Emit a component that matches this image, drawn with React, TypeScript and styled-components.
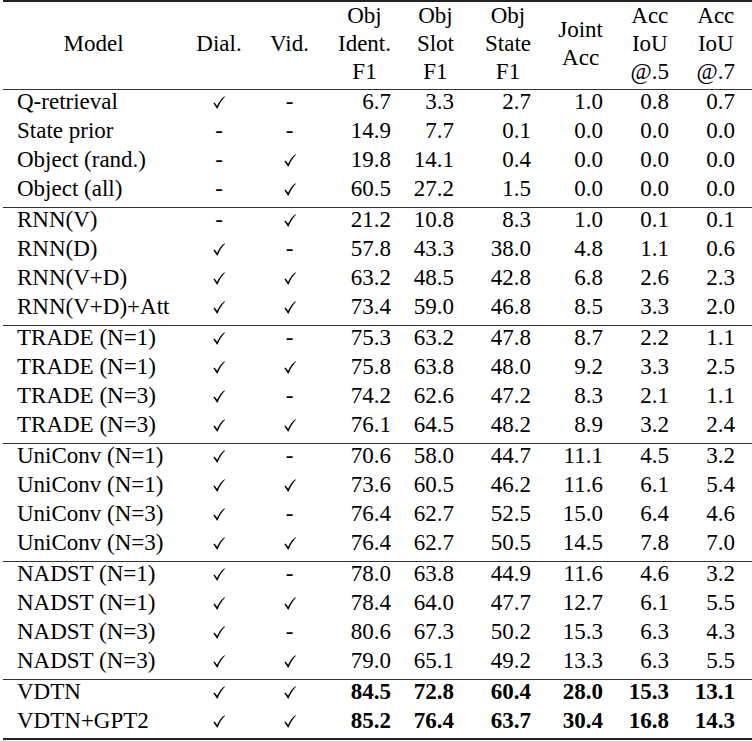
import styled, { createGlobalStyle } from "styled-components";

type Mark = "y" | "n";

interface IRow {
  model: string;
  dial: Mark;
  vid: Mark;
  scores: string[];
}

interface IColumn {
  label: string[];
  width: number;
  align: "left" | "center" | "right";
}

const GlobalStyle = createGlobalStyle`
  body {
    margin: 0;
    background: #ffffff;
  }
`;

const Page = styled.div`
  padding-left: 3px;
  width: 749px;
`;

const Table = styled.table`
  width: 749px;
  table-layout: fixed;
  border-collapse: separate;
  border-spacing: 0;
  font-family: "Liberation Serif", "Times New Roman", serif;
  font-size: 23px;
  color: #000;
  border-top: 2px solid #222;
  border-bottom: 2px solid #222;
`;

const HeadCell = styled.th<{ $w: number; $align: string; $last?: boolean }>`
  box-sizing: border-box;
  width: ${(p) => p.$w}px;
  font-weight: normal;
  line-height: 28px;
  vertical-align: middle;
  text-align: ${(p) => p.$align};
  padding: 0 ${(p) => (p.$last ? 17 : p.$align === "right" ? 13 : 0)}px 3px
    ${(p) => (p.$align === "left" ? 14 : 0)}px;
  border-bottom: 1px solid #333;
  white-space: nowrap;
`;

const HeadStack = styled.span`
  display: inline-block;
  text-align: center;
`;

const Group = styled.tbody`
  & + & tr:first-child td {
    border-top: 1px solid #333;
  }
  tr:last-child td {
    padding-bottom: 6px;
  }
  &:last-of-type tr:last-child td {
    padding-bottom: 5px;
  }
`;

const Cell = styled.td<{ $align: string; $bold?: boolean; $last?: boolean }>`
  box-sizing: border-box;
  line-height: 24px;
  vertical-align: top;
  white-space: nowrap;
  text-align: ${(p) => p.$align};
  font-weight: ${(p) => (p.$bold ? "bold" : "normal")};
  padding: 0 ${(p) => (p.$last ? 17 : p.$align === "right" ? 13 : 0)}px 5px
    ${(p) => (p.$align === "left" ? 14 : 0)}px;
`;

const CheckIcon = styled.svg`
  width: 12px;
  height: 13px;
  vertical-align: baseline;
`;

const columns: IColumn[] = [
  { label: ["Model"], width: 180, align: "left" },
  { label: ["Dial."], width: 72, align: "center" },
  { label: ["Vid."], width: 69, align: "center" },
  { label: ["Obj", "Ident.", "F1"], width: 80, align: "right" },
  { label: ["Obj", "Slot", "F1"], width: 63, align: "right" },
  { label: ["Obj", "State", "F1"], width: 77, align: "right" },
  { label: ["Joint", "Acc"], width: 72, align: "right" },
  { label: ["Acc", "IoU", "@.5"], width: 66, align: "right" },
  { label: ["Acc", "IoU", "@.7"], width: 70, align: "right" },
];

const r = (model: string, dial: Mark, vid: Mark, ...scores: string[]): IRow => ({
  model,
  dial,
  vid,
  scores,
});

const groups: IRow[][] = [
  [
    r("Q-retrieval", "y", "n", "6.7", "3.3", "2.7", "1.0", "0.8", "0.7"),
    r("State prior", "n", "n", "14.9", "7.7", "0.1", "0.0", "0.0", "0.0"),
    r("Object (rand.)", "n", "y", "19.8", "14.1", "0.4", "0.0", "0.0", "0.0"),
    r("Object (all)", "n", "y", "60.5", "27.2", "1.5", "0.0", "0.0", "0.0"),
  ],
  [
    r("RNN(V)", "n", "y", "21.2", "10.8", "8.3", "1.0", "0.1", "0.1"),
    r("RNN(D)", "y", "n", "57.8", "43.3", "38.0", "4.8", "1.1", "0.6"),
    r("RNN(V+D)", "y", "y", "63.2", "48.5", "42.8", "6.8", "2.6", "2.3"),
    r("RNN(V+D)+Att", "y", "y", "73.4", "59.0", "46.8", "8.5", "3.3", "2.0"),
  ],
  [
    r("TRADE (N=1)", "y", "n", "75.3", "63.2", "47.8", "8.7", "2.2", "1.1"),
    r("TRADE (N=1)", "y", "y", "75.8", "63.8", "48.0", "9.2", "3.3", "2.5"),
    r("TRADE (N=3)", "y", "n", "74.2", "62.6", "47.2", "8.3", "2.1", "1.1"),
    r("TRADE (N=3)", "y", "y", "76.1", "64.5", "48.2", "8.9", "3.2", "2.4"),
  ],
  [
    r("UniConv (N=1)", "y", "n", "70.6", "58.0", "44.7", "11.1", "4.5", "3.2"),
    r("UniConv (N=1)", "y", "y", "73.6", "60.5", "46.2", "11.6", "6.1", "5.4"),
    r("UniConv (N=3)", "y", "n", "76.4", "62.7", "52.5", "15.0", "6.4", "4.6"),
    r("UniConv (N=3)", "y", "y", "76.4", "62.7", "50.5", "14.5", "7.8", "7.0"),
  ],
  [
    r("NADST (N=1)", "y", "n", "78.0", "63.8", "44.9", "11.6", "4.6", "3.2"),
    r("NADST (N=1)", "y", "y", "78.4", "64.0", "47.7", "12.7", "6.1", "5.5"),
    r("NADST (N=3)", "y", "n", "80.6", "67.3", "50.2", "15.3", "6.3", "4.3"),
    r("NADST (N=3)", "y", "y", "79.0", "65.1", "49.2", "13.3", "6.3", "5.5"),
  ],
  [
    r("VDTN", "y", "y", "84.5", "72.8", "60.4", "28.0", "15.3", "13.1"),
    r("VDTN+GPT2", "y", "y", "85.2", "76.4", "63.7", "30.4", "16.8", "14.3"),
  ],
];

function Check() {
  return (
    <CheckIcon viewBox="0 0 12 13">
      <path
        d="M0.4 7.3 L1.5 6.5 L4.1 9.7 C5.9 5.7 8.5 2.4 11.5 0.2 L12 0.8 C9.2 3.4 6.6 7.3 4.7 12.6 L3.9 12.6 Z"
        fill="#000"
      />
    </CheckIcon>
  );
}

function MarkCell({ value }: { value: Mark }) {
  return <Cell $align="center">{value === "y" ? <Check /> : "-"}</Cell>;
}

function App() {
  const lastIdx = groups.length - 1;

  return (
    <Page>
      <GlobalStyle />
      <Table>
        <thead>
          <tr>
            {columns.map((col, i) => (
              <HeadCell
                key={i}
                $w={col.width}
                $align={col.align === "left" ? "center" : col.align}
                $last={i === columns.length - 1}
                style={col.align === "left" ? { paddingLeft: 14, paddingRight: 13 } : undefined}
              >
                <HeadStack>
                  {col.label.map((line, j) => (
                    <span key={j}>
                      {j > 0 && <br />}
                      {line}
                    </span>
                  ))}
                </HeadStack>
              </HeadCell>
            ))}
          </tr>
        </thead>
        {groups.map((rows, g) => (
          <Group key={g}>
            {rows.map((row, i) => (
              <tr key={i}>
                <Cell $align="left">{row.model}</Cell>
                <MarkCell value={row.dial} />
                <MarkCell value={row.vid} />
                {row.scores.map((s, k) => (
                  <Cell
                    key={k}
                    $align="right"
                    $bold={g === lastIdx}
                    $last={k === row.scores.length - 1}
                  >
                    {s}
                  </Cell>
                ))}
              </tr>
            ))}
          </Group>
        ))}
      </Table>
    </Page>
  );
}

export default App;
